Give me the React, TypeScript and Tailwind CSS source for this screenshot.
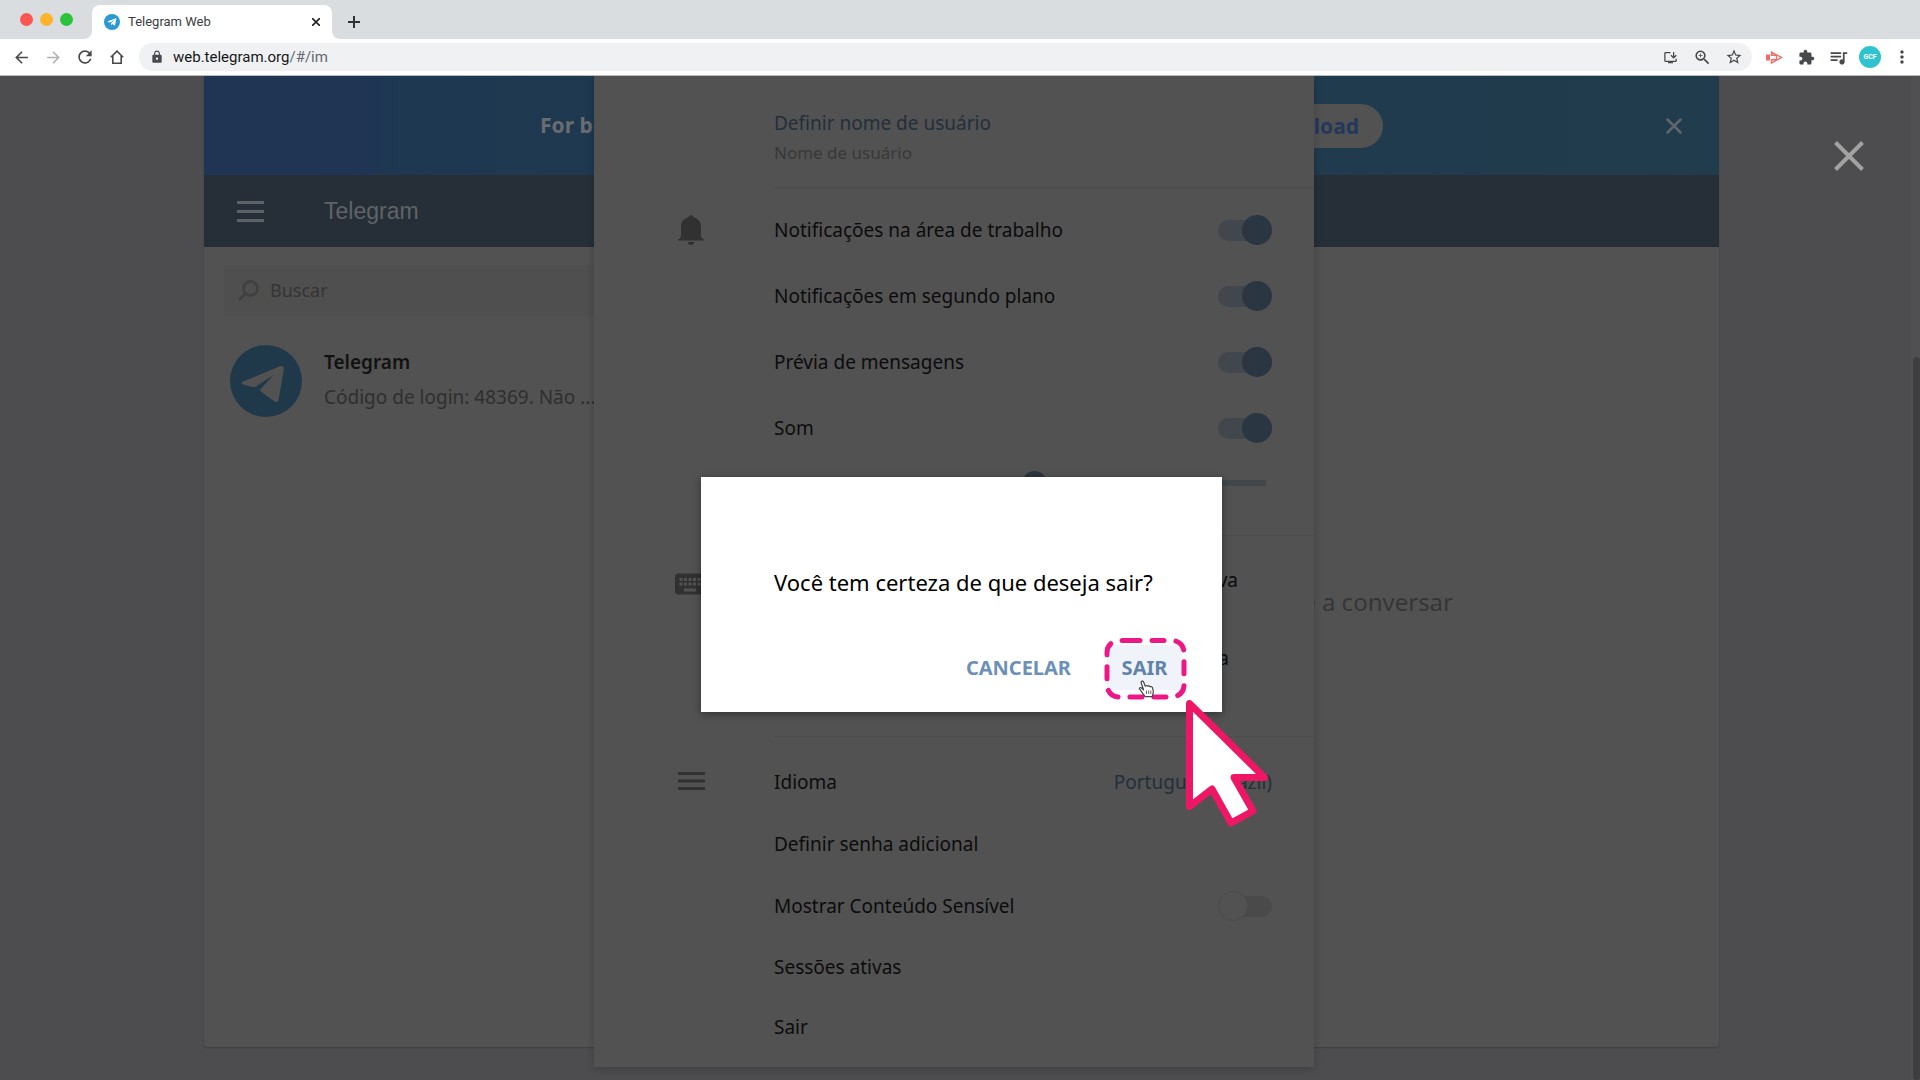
import { useState } from 'react';
import { FaTelegramPlane } from 'react-icons/fa';
import {
  MdArrowBack,
  MdArrowForward,
  MdExtension,
  MdKeyboard,
  MdLock,
  MdMoreVert,
  MdOutlineInstallDesktop,
  MdQueueMusic,
  MdRefresh,
  MdStarBorder,
  MdZoomIn,
} from 'react-icons/md';

interface ToggleRowProps {
  label: string;
  defaultOn?: boolean;
  height: string;
}

function ToggleRow({ label, defaultOn = false, height }: ToggleRowProps) {
  const [on, setOn] = useState(defaultOn);

  return (
    <label className={`flex items-center justify-between ${height}`}>
      <span>{label}</span>
      <input
        type="checkbox"
        role="switch"
        className="sr-only"
        checked={on}
        onChange={() => setOn(!on)}
      />
      <span className="relative flex h-[30px] w-[54px] items-center">
        <span
          className={
            on
              ? 'h-[21px] w-full rounded-full bg-[#41474d]'
              : 'h-[21px] w-full rounded-full bg-[#4a4a4a]'
          }
        />
        <span
          className={
            on
              ? 'absolute right-0 size-[30px] rounded-full bg-[#2a3641]'
              : 'absolute left-0 size-[30px] rounded-full border border-[#4b4b4b] bg-[#525252]'
          }
        />
      </span>
    </label>
  );
}

function BrowserTabs() {
  return (
    <div className="flex h-[39px] items-end bg-[#dadde0]">
      <div className="flex h-full w-[92px] items-center gap-[7px] pl-5">
        <span className="size-[13px] rounded-full bg-[#fc5753]" />
        <span className="size-[13px] rounded-full bg-[#fdb32b]" />
        <span className="size-[13px] rounded-full bg-[#2bc33c]" />
      </div>
      <div className="relative flex h-[34px] w-[240px] items-center rounded-t-lg bg-white pl-3 pr-2.5">
        <svg className="absolute bottom-0 -left-2 size-2" viewBox="0 0 8 8">
          <path d="M8 0v8H0a8 8 0 0 0 8-8z" fill="#fff" />
        </svg>
        <svg className="absolute bottom-0 -right-2 size-2" viewBox="0 0 8 8">
          <path d="M0 0v8h8a8 8 0 0 1-8-8z" fill="#fff" />
        </svg>
        <span className="flex size-4 items-center justify-center rounded-full bg-[#2a99d2]">
          <FaTelegramPlane size={10} className="text-white" />
        </span>
        <span className="ml-2 flex-1 text-[13px] text-[#3a3d41]">Telegram Web</span>
        <button aria-label="Close tab" className="flex size-3 items-center justify-center">
          <svg width="8" height="8" viewBox="0 0 8 8" stroke="#222" strokeWidth="1.6">
            <path d="M0 0l8 8M8 0L0 8" />
          </svg>
        </button>
      </div>
      <button aria-label="New tab" className="ml-4 flex h-[34px] w-3 items-center">
        <svg width="12" height="12" viewBox="0 0 12 12" stroke="#303235" strokeWidth="2">
          <path d="M6 0v12M0 6h12" />
        </svg>
      </button>
    </div>
  );
}

const navButton = 'flex size-8 items-center justify-center';

function BrowserToolbar() {
  return (
    <div className="flex h-[37px] items-center border-b border-[#b9bcbb] bg-white pl-[5px] pr-0.5 text-[#47494c]">
      <button className={navButton} aria-label="Back">
        <MdArrowBack size={19} />
      </button>
      <button className={`${navButton} text-[#b0b1b3]`} aria-label="Forward">
        <MdArrowForward size={19} />
      </button>
      <button className={navButton} aria-label="Reload">
        <MdRefresh size={20} />
      </button>
      <button className={navButton} aria-label="Home">
        <svg width="14" height="14" viewBox="0 0 14 14" fill="none" stroke="currentColor" strokeWidth="1.6">
          <path d="M.8 7.2L7 1.2l6.200 6M2.800 6v7.200h8.400V6" />
        </svg>
      </button>
      <div className="mx-1.5 flex h-7 flex-1 items-center rounded-full bg-[#eff1f3] pl-[11px] pr-0.5">
        <MdLock size={14} />
        <div className="relative ml-[9px] flex-1 text-[15px] leading-7">
          <input aria-label="Address" className="w-full bg-transparent outline-none" />
          {/* the host is darker than the path */}
          <div className="pointer-events-none absolute inset-0">
            <span className="text-[#17181a]">web.telegram.org</span>
            <span className="text-[#65686c]">/#/im</span>
          </div>
        </div>
        <button className={navButton} aria-label="Install app">
          <MdOutlineInstallDesktop size={15} />
        </button>
        <button className={navButton} aria-label="Zoom">
          <MdZoomIn size={19} />
        </button>
        <button className={navButton} aria-label="Bookmark">
          <MdStarBorder size={18} />
        </button>
      </div>
      <button className={navButton} aria-label="Recorder">
        <svg width="17" height="13" viewBox="0 0 17 13">
          <path d="M0 3.500h4v6H0z" fill="#ee6c6c" />
          <path d="M5.500 1l10 5.500-10 5.500V8.800h5V4.200h-5z" fill="none" stroke="#ee6c6c" strokeWidth="1.400" />
        </svg>
      </button>
      <button className={navButton} aria-label="Extensions">
        <MdExtension size={17} />
      </button>
      <button className={navButton} aria-label="Media">
        <MdQueueMusic size={21} />
      </button>
      <button className={navButton} aria-label="Profile">
        <span className="flex size-[22px] items-center justify-center rounded-full bg-[#2fc3cf] text-[7px] font-bold text-white">
          GCF
        </span>
      </button>
      <button className={navButton} aria-label="Menu">
        <MdMoreVert size={20} />
      </button>
    </div>
  );
}

function TelegramApp() {
  return (
    <div className="mx-auto mb-[33px] flex w-[1515px] max-w-full flex-1 flex-col rounded-b-sm bg-[#525252] shadow-[0_1px_2px_rgba(0,0,0,0.2)]">
      <div className="flex h-[99px] items-center justify-center bg-linear-to-r from-[#203454] from-10% via-[#1e3851] via-13% to-[#213c4c]">
        <div className="flex w-[843px] items-center justify-between text-[21px] font-bold text-[#696c70]">
          <span>For best experience, use the app</span>
          <a href="#download" className="rounded-full bg-[#525252] px-6 leading-[44px] text-[#24385a]">
            Download
          </a>
        </div>
        <button aria-label="Fechar aviso" className="absolute right-[238px] text-[#60666a]">
          <svg width="16" height="16" viewBox="0 0 16 16" stroke="currentColor" strokeWidth="2.500" strokeLinecap="round">
            <path d="M1.500 1.500l13 13M14.500 1.500l-13 13" />
          </svg>
        </button>
      </div>
      <header className="flex h-[72px] items-center gap-[60px] bg-[#262f38] pl-[33px]">
        <button aria-label="Menu">
          <svg width="27" height="21" viewBox="0 0 27 21" fill="#5d6265">
            <path d="M0 0h27v3H0zM0 9h27v3H0zM0 18h27v3H0z" />
          </svg>
        </button>
        <h1 className="font-['Liberation_Sans',sans-serif] text-[23px] text-[#5f6467]">Telegram</h1>
      </header>
      <div className="flex flex-1">
        <aside className="w-1/3 pl-5 pt-[18px]">
          <div className="flex h-[51px] items-center gap-[11px] bg-[#4f4f4f] pl-3.5 text-[18px]">
            <svg width="21" height="21" viewBox="0 0 21 21" fill="none" stroke="#404040" strokeWidth="2.800">
              <circle cx="12.500" cy="8.500" r="7" />
              <path d="M7.500 13.500L1 20" />
            </svg>
            <input
              aria-label="Buscar"
              placeholder="Buscar"
              className="w-72 bg-transparent outline-none placeholder:text-[#353535]"
            />
          </div>
          <div className="mt-[29px] flex gap-[22px] pl-1.5">
            <span className="flex size-[72px] items-center justify-center rounded-full bg-[#20394a]">
              <svg width="72" height="72" viewBox="0 0 72 72">
                <path
                  d="M13 36.500L50 21.300c2.500-.9 4.200.1 3.900 2.800l-5.300 30.600c-.5 2.600-2.300 3-4.300 1.500L31 46.800c-1.200-1-1.200-2 0-3L43.500 30 26 41.500c-1.500.8-3 .8-4.600.3l-8-2.300c-2-.8-2.200-2.200-.4-3z"
                  fill="#525252"
                />
              </svg>
            </span>
            <div className="text-[19px] leading-[35px]">
              <p className="font-semibold text-[#121212]">Telegram</p>
              <p className="whitespace-nowrap text-[#2f2f2f]">Código de login: 48369. Não ...</p>
            </div>
          </div>
        </aside>
        <main className="flex flex-1 items-start justify-end pt-[337px] pr-[266px]">
          <p className="text-2xl leading-9 text-[#363636]">Selecione um chat e comece a conversar</p>
        </main>
      </div>
    </div>
  );
}

function SettingsPanel() {
  return (
    <div className="mb-[13px] flex w-[720px] flex-col bg-[#525252] text-[19px] text-[#0c0c0c] shadow-[0_2px_8px_rgba(0,0,0,0.2)]">
      <section className="flex">
        <div className="w-[180px]" />
        <div className="flex-1 border-b border-[#4c4c4c] pt-8 pb-[19px] leading-[30px]">
          <a href="#username" className="block text-[#232f3b]">
            Definir nome de usuário
          </a>
          <p className="text-[17px] leading-[30px] text-[#383838]">Nome de usuário</p>
        </div>
      </section>

      <section className="flex">
        <div className="w-[180px] pt-[27px] pl-[84px]">
          <svg width="26" height="30" viewBox="0 0 26 30" fill="#313131">
            <path d="M13 0c1.300 0 2.300 1 2.500 2.300C20 3.400 23 7 23 11.500V20c0 2 1 3.500 3 4.500v1H0v-1c2-1 3-2.500 3-4.500v-8.500C3 7 6 3.400 10.500 2.300 10.700 1 11.700 0 13 0zM9.800 27h6.400c-.2 1.800-1.500 3-3.200 3s-3-1.200-3.200-3z" />
          </svg>
        </div>
        <div className="flex-1 border-b border-[#4c4c4c] pt-[9px] pr-[42px] pb-[30px]">
          <ToggleRow label="Notificações na área de trabalho" defaultOn height="h-[66px]" />
          <ToggleRow label="Notificações em segundo plano" defaultOn height="h-[66px]" />
          <ToggleRow label="Prévia de mensagens" defaultOn height="h-[66px]" />
          <ToggleRow label="Som" defaultOn height="h-[66px]" />
          <div className="flex h-11 items-center pr-1.5">
            <input
              type="range"
              aria-label="Volume"
              defaultValue={53}
              className="h-1.5 w-full appearance-none bg-[#41474b] [&::-webkit-slider-thumb]:size-[25px] [&::-webkit-slider-thumb]:appearance-none [&::-webkit-slider-thumb]:rounded-full [&::-webkit-slider-thumb]:bg-[#2a3641]"
            />
          </div>
        </div>
      </section>

      <section className="flex">
        <div className="w-[180px] pt-[30px] pl-[78px] text-[#313131]">
          <MdKeyboard size={36} />
        </div>
        <div className="flex-1 border-b border-[#4c4c4c] pt-[30px] pr-[76px] pb-3.5 leading-7">
          <label className="flex h-[78px] justify-end gap-3">
            <input type="radio" name="send" className="size-5" defaultChecked />
            <span>Enter envia, Shift + Enter linha nova</span>
          </label>
          <label className="flex h-[78px] justify-end gap-3 pr-[9px]">
            <input type="radio" name="send" className="size-5" />
            <span>Ctrl + Enter envia, Enter nova linha</span>
          </label>
        </div>
      </section>

      <section className="flex">
        <div className="w-[180px] pt-[35px] pl-[84px]">
          <svg width="27" height="18" viewBox="0 0 27 18" fill="#313131">
            <path d="M0 0h27v3H0zM0 7.500h27v3H0zM0 15h27v3H0z" />
          </svg>
        </div>
        <div className="flex-1 pt-3.5 pr-[42px]">
          <button className="flex h-[62px] w-full items-center justify-between">
            <span>Idioma</span>
            <span className="text-[#232f3b]">Português (Brazil)</span>
          </button>
          <button className="flex h-[62px] w-full items-center">Definir senha adicional</button>
          <ToggleRow label="Mostrar Conteúdo Sensível" height="h-[62px]" />
          <button className="flex h-[60px] w-full items-center">Sessões ativas</button>
          <button className="flex h-[60px] w-full items-center">Sair</button>
        </div>
      </section>
    </div>
  );
}

function ConfirmDialog() {
  return (
    <div
      role="dialog"
      aria-modal="true"
      className="relative flex h-[235px] w-[521px] flex-col bg-white pt-[87px] shadow-[0_2px_8px_rgba(0,0,0,0.4)]"
    >
      <p className="pl-[73px] text-[22px] leading-9 text-black">Você tem certeza de que deseja sair?</p>
      <div className="mt-[45px] flex justify-end gap-[22px] pr-10 text-xl font-bold">
        <button className="h-[45px] px-3.5 text-[#6c91b6]">CANCELAR</button>
        <button className="relative h-[45px] w-[75px] rounded-sm bg-[#f0f4fa] text-[#6184aa]">
          SAIR
          {/* dashed highlight and hand pointer */}
          <svg className="absolute -top-2.5 -left-1 overflow-visible" width="84" height="64" viewBox="0 0 84 64" fill="none">
            <path
              d="M25 5.500H69a12 12 0 0 1 12 12V50a12 12 0 0 1-12 12H16A12 12 0 0 1 4 50V17.500A12 12 0 0 1 16 5.500H25"
              stroke="#ee1787"
              strokeWidth="5"
              strokeLinecap="round"
              strokeDasharray="12 12"
            />
            <path
              d="M40 59c-1-2-2.200-3.300-3.400-4.800-.8-1.200.9-2.100 1.900-1.200l2 1.800-2.300-7c-.4-1.800 1.700-2.400 2.400-.8l1.700 4.200c.6-1 2-.9 2.400.1.800-.8 2-.5 2.400.5.900-.6 2.100 0 2.400 1l.8 3.400c.2 1.500-.3 2.600-.7 3.800l-.2 1.600h-7.200z"
              fill="#fff"
              stroke="#444"
              strokeWidth="1.200"
              strokeLinejoin="round"
            />
            <path d="M43.500 55.500V59M45.700 55.500V59M47.800 55.500V59" stroke="#444" strokeWidth=".8" />
          </svg>
        </button>
      </div>
      <svg
        className="pointer-events-none absolute -right-12 -bottom-[118px]"
        width="88"
        height="134"
        viewBox="0 0 88 134"
      >
        <path
          d="M7.500 7.500L82.500 81.500H52L71 115l-22 12L30 93 7.500 110.500z"
          fill="#fff"
          stroke="#ee1766"
          strokeWidth="7"
          strokeLinejoin="round"
        />
      </svg>
    </div>
  );
}

export default function App() {
  return (
    <div className="flex h-screen flex-col overflow-hidden font-['Noto_Sans',sans-serif]">
      <div className="font-[Roboto,sans-serif]">
        <BrowserTabs />
        <BrowserToolbar />
      </div>
      <div className="relative flex flex-1 flex-col overflow-hidden bg-[#4d4d4f] pl-[3px]">
        <TelegramApp />

        <div className="absolute inset-0 flex">
          <div className="flex flex-1 items-stretch justify-center pr-[3px]">
            <SettingsPanel />
          </div>
          <button aria-label="Fechar" className="absolute top-[65px] right-14 text-[#a2a2a2]">
            <svg width="30" height="30" viewBox="0 0 30 30" stroke="currentColor" strokeWidth="4">
              <path d="M1.500 1.500l27 27M28.500 1.500l-27 27" />
            </svg>
          </button>
          <div className="flex w-[9px] items-end bg-[#505050] pl-0.5">
            <div className="h-[72%] w-full rounded-full bg-[#3e3e3e]" />
          </div>
        </div>

        <div className="absolute inset-0 flex items-center justify-center pt-[33px] pl-[3px]">
          <ConfirmDialog />
        </div>
      </div>
    </div>
  );
}
